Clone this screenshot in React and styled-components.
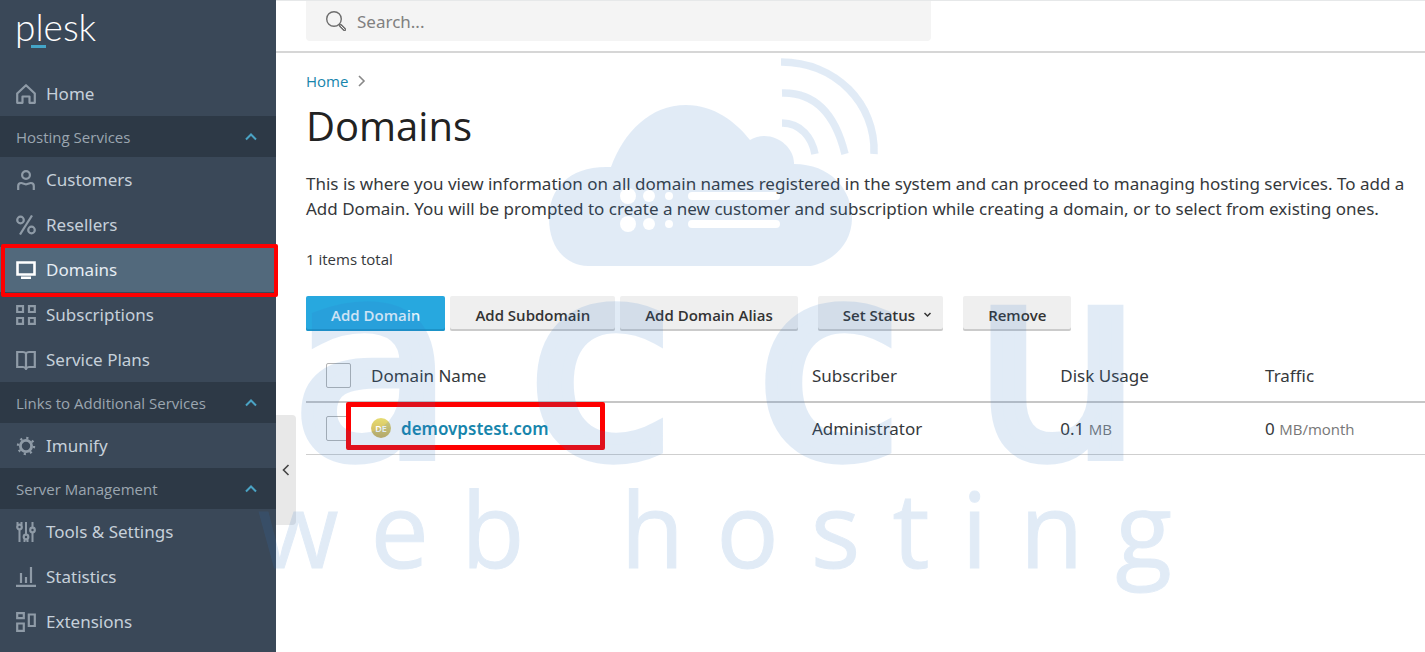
import React from 'react';
import styled, { createGlobalStyle } from 'styled-components';

const theme = {
  font: "'Noto Sans', 'Open Sans', sans-serif",
  smallFont: "'Open Sans', 'Noto Sans', sans-serif",
  colors: {
    sidebar: '#3a4858',
    sidebarDark: '#2d3946',
    active: '#52697c',
    link: '#1785ac',
    primary: '#27a8df',
    text: '#35383b',
    highlight: '#fe0000',
  },
};

const GlobalStyle = createGlobalStyle`
  * {
    box-sizing: border-box;
  }

  body {
    margin: 0;
    background: #fff;
    color: ${theme.colors.text};
    font-family: ${theme.font};
    font-size: 17px;
  }
`;

const Page = styled.div`
  position: relative;
  display: flex;
  min-height: 100vh;
  overflow: hidden;
`;

const Sidebar = styled.nav`
  flex: 0 0 276px;
  background: ${theme.colors.sidebar};
`;

const Logo = styled.a`
  position: relative;
  display: block;
  height: 71px;
  padding: 5px 15px;
  color: #fff;
  font-family: Lato, sans-serif;
  font-size: 37px;
  font-weight: 300;
  line-height: 44px;
  text-decoration: none;

  &:after {
    content: '';
    position: absolute;
    top: 45px;
    left: 31px;
    width: 15px;
    height: 3px;
    background: #44a5c8;
  }
`;

const MenuItem = styled.a`
  position: relative;
  display: flex;
  align-items: center;
  gap: 10px;
  height: 45px;
  padding: 0 16px;
  color: ${props => (props.$active ? '#e6edf3' : '#c6d0da')};
  background: ${props => (props.$active ? theme.colors.active : 'transparent')};
  text-decoration: none;

  svg {
    flex: none;
    color: ${props => (props.$active ? '#fff' : '#8f9ba7')};
  }
`;

const MenuHighlight = styled.span`
  position: absolute;
  inset: -3px -2px -5px 1px;
  border: 4px solid ${theme.colors.highlight};
  border-radius: 2px;
`;

const GroupTitle = styled.button`
  display: flex;
  align-items: center;
  justify-content: space-between;
  width: 100%;
  height: 41px;
  padding: 0 19px 0 16px;
  border: 0;
  background: ${theme.colors.sidebarDark};
  color: #9ba6b0;
  font-family: ${theme.smallFont};
  font-size: 15px;

  svg {
    color: #4aa3c4;
  }
`;

const Main = styled.main`
  position: relative;
  flex: 1;
  min-width: 0;
`;

const TopBar = styled.header`
  height: 53px;
  padding: 0 30px;
  border-top: 1px solid #e6e8e9;
  border-bottom: 2px solid #d6d6d6;
`;

const SearchBox = styled.label`
  display: flex;
  align-items: center;
  gap: 11px;
  width: 625px;
  max-width: 100%;
  height: 40px;
  padding: 0 20px;
  border-radius: 0 0 4px 4px;
  background: #f4f4f4;
  color: #6e6e6e;
`;

const SearchInput = styled.input`
  flex: 1;
  min-width: 0;
  padding: 0;
  border: 0;
  outline: 0;
  background: transparent;
  font-family: inherit;
  font-size: 17px;

  &::placeholder {
    color: #808080;
    opacity: 1;
  }
`;

const CollapseButton = styled.button`
  position: absolute;
  top: 415px;
  left: 0;
  display: flex;
  align-items: center;
  justify-content: center;
  width: 20px;
  height: 110px;
  padding: 0;
  border: 0;
  border-radius: 0 4px 4px 0;
  background: #e8e8e8;
  color: #444;
`;

const Content = styled.div`
  padding: 17px 0 0 30px;
`;

const Breadcrumbs = styled.div`
  display: flex;
  align-items: center;
  gap: 8px;
  font-family: ${theme.smallFont};
  font-size: 15px;
  line-height: 22px;
  color: #888;

  a {
    color: ${theme.colors.link};
    text-decoration: none;
  }
`;

const Title = styled.h1`
  margin: 6px 0 17px;
  color: #222;
  font-family: ${theme.smallFont};
  font-size: 40px;
  font-weight: 400;
  line-height: 56px;
`;

const Description = styled.p`
  margin: 0;
  line-height: 25px;
  white-space: nowrap;
`;

const Total = styled.div`
  margin: 27px 0 26px;
  font-family: ${theme.smallFont};
  font-size: 15px;
  line-height: 22px;
`;

const Toolbar = styled.div`
  display: flex;
  gap: 20px;
`;

const ButtonGroup = styled.div`
  display: flex;
  gap: 5px;
`;

const Button = styled.button`
  display: flex;
  align-items: center;
  gap: 8px;
  height: 35px;
  padding: 2px ${props => (props.$menu ? '11px' : '25px')} 0 25px;
  border: 0;
  border-radius: 2px;
  background: ${props => (props.$primary ? theme.colors.primary : '#efefef')};
  box-shadow: inset 0 -2px ${props => (props.$primary ? '#1c93c8' : '#cbcbcb')};
  color: ${props => (props.$primary ? '#e8f6fd' : '#333')};
  font-family: ${theme.smallFont};
  font-size: 15px;
  font-weight: 600;
  white-space: nowrap;
`;

const Table = styled.table`
  width: 100%;
  margin-top: 19px;
  border-collapse: collapse;
  table-layout: fixed;
`;

const Cell = styled.td`
  width: ${props => props.$width || 'auto'};
  height: 52px;
  padding: 0;
  border-bottom: 1px solid #cfcfcf;
  font-weight: 400;
  text-align: left;

  small {
    color: #777;
    font-family: ${theme.smallFont};
    font-size: 15px;
  }
`;

const HeadCell = styled(Cell)`
  border-bottom: 2px solid #c6c6c6;
`;

const Checkbox = styled.input`
  display: block;
  width: 25px;
  height: 25px;
  margin: 0 0 0 20px;
  border: 1px solid #b4b4b4;
  border-radius: 2px;
  background: #fff;
  appearance: none;
`;

const Domain = styled.div`
  position: relative;
  display: flex;
  align-items: center;
  gap: 10px;

  a {
    color: ${theme.colors.link};
    font-weight: 600;
    text-decoration: none;
  }
`;

const DomainBadge = styled.span`
  display: flex;
  align-items: center;
  justify-content: center;
  width: 20px;
  height: 20px;
  border-radius: 50%;
  background: linear-gradient(#e6dc72, #cbb05c);
  color: #fff;
  font-size: 9px;
  font-weight: 600;
`;

const DomainHighlight = styled.span`
  position: absolute;
  top: -15px;
  left: -25px;
  width: 259px;
  height: 48px;
  border: 5px solid ${theme.colors.highlight};
  border-radius: 2px;
`;

const Watermark = styled.div`
  position: absolute;
  top: 56px;
  left: 258px;
  width: 914px;
  color: #3077c6;
  opacity: 0.14;
  pointer-events: none;
`;

const Cloud = styled.svg`
  display: block;
  margin-left: 288px;
`;

const Brand = styled.div`
  display: grid;
  grid-template-columns: repeat(4, 1fr);
  height: 190px;
  font-family: 'DejaVu Sans', sans-serif;
  font-size: 264px;
  line-height: 192px;
  text-align: center;
  -webkit-text-stroke: 12px #3077c6;
`;

const Tagline = styled.div`
  display: flex;
  justify-content: space-between;
  font-family: 'Open Sans', sans-serif;
  font-size: 104px;
  line-height: 140px;
  -webkit-text-stroke: 1px #3077c6;
`;

const Word = styled.span`
  display: flex;
  gap: 32px;
`;

const Chevron = ({ d, size = 12, width = 2 }) => (
  <svg width={size} height={size} viewBox="0 0 12 12" fill="none" stroke="currentColor" strokeWidth={width}>
    <path d={d} />
  </svg>
);

const Icon = ({ children }) => (
  <svg width="20" height="20" viewBox="0 0 20 20" fill="none" stroke="currentColor" strokeWidth="2.2">
    {children}
  </svg>
);

const icons = {
  home: <path d="M1.200 18.800V9.500L10 1.200l8.800 8.300v9.300H13.500v-6.300h-7v6.300z" strokeLinejoin="round" />,
  customers: (
    <>
      <circle cx="10" cy="5" r="3.900" />
      <path d="M2.200 20v-4q0-3 3-3 1 0 2 .6 2.800 1.400 5.600 0 1-.6 2-.6 3 0 3 3v4" />
    </>
  ),
  resellers: (
    <>
      <circle cx="4.500" cy="5" r="3.300" />
      <circle cx="15.500" cy="15" r="3.300" />
      <path d="M16 .5 4 19.500" />
    </>
  ),
  domains: <path d="M1.500 2.500h17v12h-17zM5 17.800h10" strokeWidth="2.600" />,
  subscriptions: <path d="M1.200 1.200H7V7H1.200zM13 1.200h5.800V7H13zM1.200 13H7v5.800H1.200zM13 13h5.800v5.800H13z" />,
  plans: <path d="M10 3.500Q9 2 7 2H1.200v15H7q2 0 3 2 1-2 3-2h5.800V2H13q-2 0-3 1.500V19" />,
  imunify: (
    <>
      <circle cx="10" cy="10" r="5.600" strokeWidth="2.800" />
      <circle cx="10" cy="10" r="8" strokeWidth="2.400" strokeDasharray="2.200 4.083" />
    </>
  ),
  tools: (
    <>
      <circle cx="3.500" cy="5" r="2.300" />
      <circle cx="10" cy="15" r="2.300" />
      <circle cx="16.500" cy="8" r="2.300" />
      <path d="M3.500 7.500V20M1.500 0v3M5.500 0v3M10 0v12.500M16.500 0v5.500M16.500 10.500V20M8.500 17.500v2.500M11.500 17.500v2.500" strokeWidth="2" />
    </>
  ),
  statistics: <path d="M0 18.800h20M5 16V6M10 16v-6M15 16V0" />,
  extensions: <path d="M1.200 1.200h6.600v5H1.200zM1.200 11.500h6.600v7.300H1.200zM12.800 2.500h6v11.500h-6z" />,
};

const groups = [
  { items: [['home', 'Home']] },
  {
    title: 'Hosting Services',
    items: [
      ['customers', 'Customers'],
      ['resellers', 'Resellers'],
      ['domains', 'Domains'],
      ['subscriptions', 'Subscriptions'],
      ['plans', 'Service Plans'],
    ],
  },
  { title: 'Links to Additional Services', items: [['imunify', 'Imunify']] },
  {
    title: 'Server Management',
    items: [
      ['tools', 'Tools & Settings'],
      ['statistics', 'Statistics'],
      ['extensions', 'Extensions'],
    ],
  },
];

const letters = text => text.split('').map((letter, i) => <span key={i}>{letter}</span>);

const WatermarkLogo = () => (
  <Watermark aria-hidden="true">
    <Cloud width="336" height="212" viewBox="546 56 336 212">
      <mask id="server">
        <rect x="546" y="56" width="336" height="212" fill="#fff" />
        <circle cx="628" cy="196" r="8" />
        <circle cx="649" cy="196" r="6" />
        <circle cx="669" cy="196" r="4" />
        <circle cx="628" cy="224" r="8" />
        <circle cx="649" cy="224" r="6" />
        <circle cx="669" cy="224" r="4" />
        <rect x="688" y="192" width="92" height="8" rx="4" />
        <rect x="688" y="220" width="92" height="8" rx="4" />
      </mask>
      <path
        mask="url(#server)"
        fill="currentColor"
        d="M588 266C563 265 549 245 549 218C549 188 570 165 611 167C624 132 650 105 686 105C714 105 736 122 750 140C770 128 795 145 794 164C830 164 852 189 852 218C852 245 831 262 811 266Z"
      />
      <g fill="none" stroke="currentColor" strokeWidth="7.500">
        <path d="M781 62C836 62 876 104 874 154" />
        <path d="M782 93C820 92 837 121 845 154" />
        <path d="M782 123C801 123 812 138 815 154" />
      </g>
    </Cloud>
    <Brand>{letters('accu')}</Brand>
    <Tagline>
      <Word>{letters('web')}</Word>
      <Word>{letters('hosting')}</Word>
    </Tagline>
  </Watermark>
);

export default function App() {
  return (
    <>
      <GlobalStyle />
      <Page>
        <Sidebar>
          <Logo href="#">plesk</Logo>
          {groups.map((group, i) => (
            <div key={i}>
              {group.title && (
                <GroupTitle type="button">
                  {group.title}
                  <Chevron d="M1 8.500 6 3.500l5 5" />
                </GroupTitle>
              )}
              {group.items.map(([icon, label]) => (
                <MenuItem key={icon} href="#" $active={icon === 'domains'}>
                  <Icon>{icons[icon]}</Icon>
                  {label}
                  {icon === 'domains' && <MenuHighlight />}
                </MenuItem>
              ))}
            </div>
          ))}
        </Sidebar>

        <Main>
          <TopBar>
            <SearchBox>
              <svg width="20" height="20" viewBox="0 0 20 20" fill="none" stroke="currentColor">
                <circle cx="8" cy="8" r="7.300" strokeWidth="1.400" />
                <path d="m13 13 1.500 1.500" strokeWidth="1.400" />
                <path d="m14.500 14.500 4 4" strokeWidth="3.400" strokeLinecap="round" />
                <path d="m14.800 14.800 3.600 3.600" stroke="#f4f4f4" strokeWidth="1" strokeLinecap="round" />
              </svg>
              <SearchInput type="text" placeholder="Search..." aria-label="Search" />
            </SearchBox>
          </TopBar>

          <Content>
            <Breadcrumbs>
              <a href="#">Home</a>
              <Chevron d="M3 1l5 5-5 5" width={1.6} />
            </Breadcrumbs>
            <Title>Domains</Title>
            <Description>
              This is where you view information on all domain names registered in the system and can proceed to managing hosting services. To add a
              <br />
              Add Domain. You will be prompted to create a new customer and subscription while creating a domain, or to select from existing ones.
            </Description>
            <Total>1 items total</Total>

            <Toolbar>
              <ButtonGroup>
                <Button type="button" $primary>Add Domain</Button>
                <Button type="button">Add Subdomain</Button>
                <Button type="button">Add Domain Alias</Button>
              </ButtonGroup>
              <Button type="button" $menu>
                Set Status
                <Chevron d="M2 4l4 4 4-4" size={9} />
              </Button>
              <Button type="button">Remove</Button>
            </Toolbar>

            <Table>
              <thead>
                <tr>
                  <HeadCell as="th" $width="65px"><Checkbox type="checkbox" aria-label="Select all" /></HeadCell>
                  <HeadCell as="th" $width="39.4%">Domain Name</HeadCell>
                  <HeadCell as="th" $width="22.2%">Subscriber</HeadCell>
                  <HeadCell as="th" $width="18.3%">Disk Usage</HeadCell>
                  <HeadCell as="th">Traffic</HeadCell>
                </tr>
              </thead>
              <tbody>
                <tr>
                  <Cell><Checkbox type="checkbox" aria-label="Select demovpstest.com" /></Cell>
                  <Cell>
                    <Domain>
                      <DomainBadge>DE</DomainBadge>
                      <a href="#">demovpstest.com</a>
                      <DomainHighlight />
                    </Domain>
                  </Cell>
                  <Cell>Administrator</Cell>
                  <Cell>0.1 <small>MB</small></Cell>
                  <Cell>0 <small>MB/month</small></Cell>
                </tr>
              </tbody>
            </Table>
          </Content>

          <CollapseButton type="button" aria-label="Collapse sidebar">
            <Chevron d="M8.500 1l-5 5 5 5" width={1.6} />
          </CollapseButton>
        </Main>
        <WatermarkLogo />
      </Page>
    </>
  );
}
